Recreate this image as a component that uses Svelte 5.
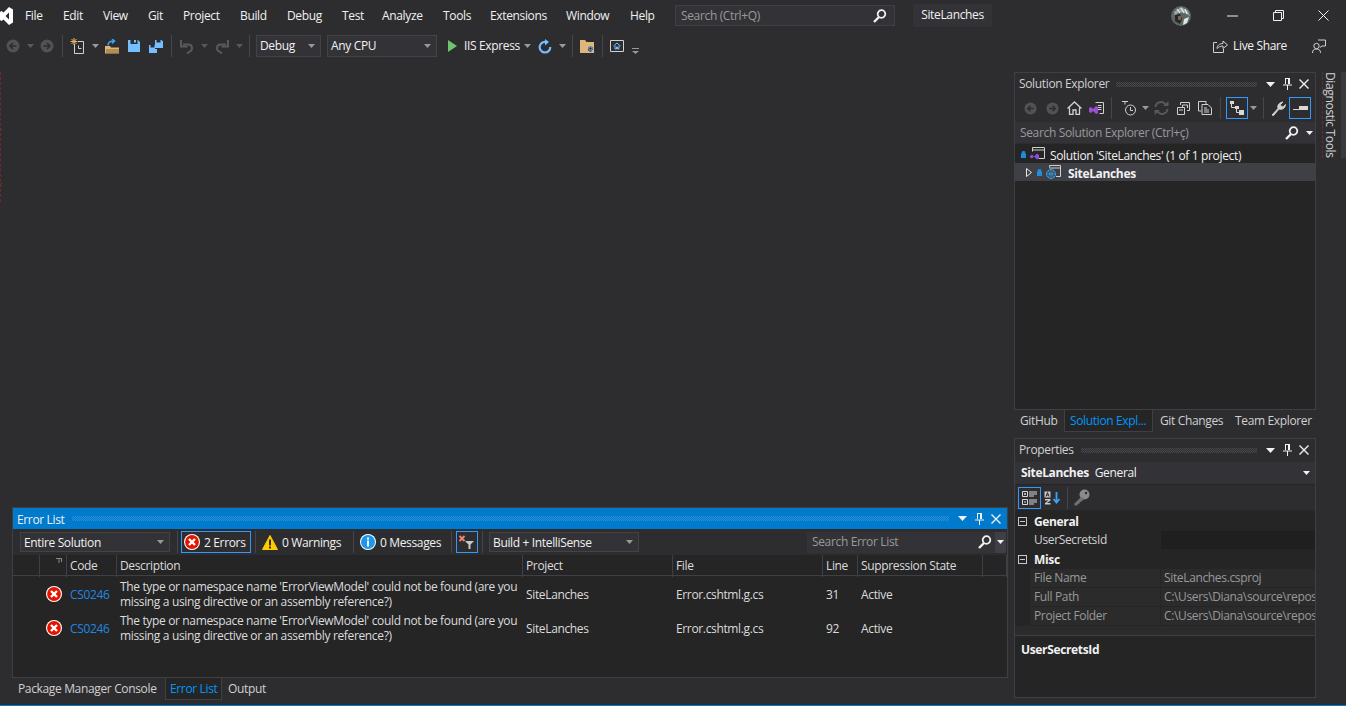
<script>
  const menus = ['File','Edit','View','Git','Project','Build','Debug','Test','Analyze','Tools','Extensions','Window','Help'];
  const errors = [
    { line: 31 },
    { line: 92 }
  ];
</script>

{#snippet arrow(cls)}
  <svg class={cls} width="7" height="4" viewBox="0 0 7 4"><path d="M0 0h7L3.5 4z" fill="currentColor"/></svg>
{/snippet}

{#snippet panelControls()}
  <span class="pc">
    <span class="pc-cell"><svg width="9" height="5" viewBox="0 0 9 5"><path d="M0 0h9L4.5 5z" fill="#f1f1f1"/></svg></span>
    <span class="pc-cell"><svg width="9" height="12" viewBox="0 0 9 12"><path d="M2 .5h5M2.5 1v5M6.5 1v5M5.5 1v5M0 7h9M4.5 7v5" stroke="#f1f1f1" fill="none"/></svg></span>
    <span class="pc-cell"><svg width="10" height="10" viewBox="0 0 10 10"><path d="M.5.5l9 9M9.5.5l-9 9" stroke="#f1f1f1" stroke-width="1.4" fill="none"/></svg></span>
  </span>
{/snippet}

{#snippet errorIcon()}
  <svg width="16" height="16" viewBox="0 0 16 16">
    <circle cx="8" cy="8" r="8" fill="#fff"/>
    <circle cx="8" cy="8" r="6.900" fill="#e51400"/>
    <path d="M5 5l6 6M11 5l-6 6" stroke="#fff" stroke-width="2.400" fill="none"/>
  </svg>
{/snippet}

{#snippet searchGlass()}
  <svg width="14" height="14" viewBox="0 0 14 14"><circle cx="8.500" cy="5" r="3.800" fill="none" stroke="#f1f1f1" stroke-width="1.800"/><path d="M6 8l-5 5" stroke="#f1f1f1" stroke-width="2.400"/></svg>
{/snippet}

{#snippet lock()}
  <svg width="5" height="7" viewBox="0 0 5 7"><path d="M0 3h5v4H0zM1 3V1.500a1.500 1.500 0 0 1 3 0V3" fill="#1c97ea" stroke="#1c97ea" stroke-width=".6" fill-opacity=".9"/></svg>
{/snippet}

<div class="app">
  <header class="menubar">
    <span class="logo">
      <svg width="14" height="18" viewBox="0 0 14 18"><path fill-rule="evenodd" fill="#fff" d="M9 0l4 2.500v13L9 18l-5.500-5.500-2 1.500L0 13V5l1.500-1 2 1.500zM9 5.500L5.500 9 9 12.500z"/></svg>
    </span>
    <nav class="menus">
      {#each menus as m}<span>{m}</span>{/each}
    </nav>
    <div class="quick">
      <span>Search (Ctrl+Q)</span>
      {@render searchGlass()}
    </div>
    <div class="sln-name">SiteLanches</div>
    <span class="avatar">
      <svg width="20" height="20" viewBox="0 0 20 20">
        <circle cx="10" cy="10" r="10" fill="#5d6664"/>
        <path d="M3 6l7-5 7 4 2 5-5-3-6-1-4 4z" fill="#9aa6a4"/>
        <path d="M6 3l3 4M10 2l3 5M14 3l2 5" stroke="#e4ebea" stroke-width="1.200"/>
        <path d="M4 9l5-1 2 5-2 5-5-3z" fill="#2c2727"/>
        <path d="M7 10h3v4H7z" fill="#7d5f58"/>
        <path d="M13 13l5-2-2 6-4 2z" fill="#dfe6e5"/>
      </svg>
    </span>
    <span class="win"><svg width="11" height="2" viewBox="0 0 11 2"><path d="M0 1h11" stroke="#f1f1f1"/></svg></span>
    <span class="win"><svg width="11" height="11" viewBox="0 0 11 11"><path d="M.5 2.500h8v8h-8zM2.500 2.500v-2h8v8h-2" fill="none" stroke="#f1f1f1"/></svg></span>
    <span class="win last"><svg width="11" height="11" viewBox="0 0 11 11"><path d="M.5.5l10 10M10.500.5l-10 10" stroke="#f1f1f1" fill="none"/></svg></span>
  </header>

  <div class="toolbar">
    <span class="ic w20"><svg width="14" height="14" viewBox="0 0 14 14"><circle cx="7" cy="7" r="6.500" fill="#525254"/><path d="M10.500 7h-6M7 4L4 7l3 3" stroke="#2d2d30" stroke-width="1.600" fill="none"/></svg></span>
    <span class="ic w14 dim">{@render arrow('')}</span>
    <span class="ic w20"><svg width="14" height="14" viewBox="0 0 14 14"><circle cx="7" cy="7" r="6.500" fill="#525254"/><path d="M3.500 7h6M7 4l3 3-3 3" stroke="#2d2d30" stroke-width="1.600" fill="none"/></svg></span>
    <span class="sep w10"></span>
    <span class="ic w21"><svg width="15" height="16" viewBox="0 0 15 16"><path d="M4.500 6v9.500h9V3.500H8" fill="none" stroke="#d0d0d0"/><path d="M8.500 7.500v3h3" fill="none" stroke="#d0d0d0"/><path d="M4 0v7M.5 3.500h7M1.500 1l5 5M6.500 1l-5 5" stroke="#e8b965"/></svg></span>
    <span class="ic w14 mid">{@render arrow('')}</span>
    <span class="ic w20"><svg width="15" height="15" viewBox="0 0 15 15"><path d="M0 14.500V7h5l1 1.500h8v6z" fill="#dcb67a"/><path d="M1 14h13V10H1z" fill="#b58d4f"/><path d="M3 6.500C3 3.500 5 2 9 2M7 .0l2.500 2L7 4.500" fill="none" stroke="#3ba4f5" stroke-width="1.500"/></svg></span>
    <span class="ic w24"><svg width="12" height="12" viewBox="0 0 12 12"><path d="M0 0h2.500v4h7V0H10l2 2v10H0z" fill="#75beff"/><path d="M6 0h2v2.500H6z" fill="#75beff"/></svg></span>
    <span class="ic w20"><svg width="14" height="13" viewBox="0 0 14 13"><path d="M6 0h1.500v2.500h4V0h1L14 1.500V8H6z" fill="#75beff"/><path d="M0 5h1.500v2.500h4V5h.500v8H0z" fill="#75beff"/><path d="M6 9h2v4H6z" fill="#75beff"/></svg></span>
    <span class="sep w10"></span>
    <span class="ic w20"><svg width="13" height="15" viewBox="0 0 13 15"><path d="M3 5.500h5.500a3.700 3.700 0 0 1 1 7.200L7 14.500" fill="none" stroke="#59595b" stroke-width="2"/><path d="M1 1v6.500h6.500" fill="none" stroke="#59595b" stroke-width="2"/></svg></span>
    <span class="ic w16 dim">{@render arrow('')}</span>
    <span class="ic w20"><svg width="13" height="15" viewBox="0 0 13 15"><path d="M10 5.500H4.500a3.700 3.700 0 0 0-1 7.200L6 14.500" fill="none" stroke="#59595b" stroke-width="2"/><path d="M12 1v6.500H5.500" fill="none" stroke="#59595b" stroke-width="2"/></svg></span>
    <span class="ic w14 dim">{@render arrow('')}</span>
    <span class="sep w6"></span>
    <div class="combo c-debug"><span>Debug</span>{@render arrow('')}</div>
    <div class="combo c-cpu"><span>Any CPU</span>{@render arrow('')}</div>
    <span class="ic w20 play"><svg width="9" height="12" viewBox="0 0 9 12"><path d="M0 0l9 6-9 6z" fill="#6fc26f"/></svg></span>
    <span class="iis">IIS Express</span>
    <span class="ic w16 mid">{@render arrow('')}</span>
    <span class="ic w20"><svg width="14" height="15" viewBox="0 0 14 15"><path d="M9.500 3.500A5.300 5.300 0 1 0 12.300 8" fill="none" stroke="#75beff" stroke-width="2.200"/><path d="M7 0v6.500L11 3z" fill="#75beff"/></svg></span>
    <span class="ic w14 mid">{@render arrow('')}</span>
    <span class="sep w6"></span>
    <span class="ic w24"><svg width="15" height="13" viewBox="0 0 15 13"><path d="M0 13V0h5l1.500 2H14v11z" fill="#dcb67a"/><circle cx="10.500" cy="9" r="2.200" fill="#2d2d30" stroke="#2d2d30"/><circle cx="10.500" cy="8.500" r="1.700" fill="none" stroke="#75beff"/><path d="M12 10l2 2" stroke="#75beff" stroke-width="1.400"/></svg></span>
    <span class="sep w6"></span>
    <span class="ic w24"><svg width="14" height="12" viewBox="0 0 14 12"><path d="M.5.5h13v11H.5z" fill="none" stroke="#d0d0d0"/><path d="M3.500 6L7 3l3.500 3M5 5.500v3.500h1.500V7h1v2H9V5.500" fill="none" stroke="#75beff"/></svg></span>
    <span class="ic w12 overflow"><svg width="7" height="6" viewBox="0 0 7 6"><path d="M0 .5h7" stroke="#999"/><path d="M0 3h7L3.500 6z" fill="#999"/></svg></span>
    <span class="share">
      <svg width="15" height="14" viewBox="0 0 15 14"><path d="M4 3.500H.5v10h10V10" fill="none" stroke="#d0d0d0"/><path d="M4 9.500c0-3 2.500-5 6-5V2l4.500 4L10 9.500V7C7.500 7 5.500 8 4 9.500z" fill="none" stroke="#d0d0d0"/></svg>
      <span>Live Share</span>
    </span>
    <span class="feedback">
      <svg width="14" height="14" viewBox="0 0 14 14"><circle cx="4.500" cy="7" r="2.700" fill="none" stroke="#d0d0d0"/><path d="M.5 14c0-3 1.500-4 4-4s4 1 4 4M6 1h7.500v6H10L8 8.500" fill="none" stroke="#d0d0d0"/></svg>
    </span>
  </div>

  <main class="workspace">
    <aside class="left-rail">
      <div class="rail-clip"><span>Server Explorer</span><span class="second">Toolbox</span></div>
    </aside>

    <section class="center">
      <div class="editor"></div>
      <div class="errors">
        <div class="title active">
          <span>Error List</span><i class="grip"></i>{@render panelControls()}
        </div>
        <div class="err-tools">
          <div class="combo c-scope"><span>Entire Solution</span>{@render arrow('')}</div>
          <span class="sep w8 first"></span>
          <button class="toggle on">{@render errorIcon()}<span>2 Errors</span></button>
          <span class="sep w8"></span>
          <button class="toggle warn">
            <svg width="16" height="15" viewBox="0 0 16 15"><path d="M8 .5L15.500 14.500H.5z" fill="#ffcc00" stroke="#ffcc00" stroke-linejoin="round"/><path d="M8 4.500v6M8 11.500v2" stroke="#1e1e1e" stroke-width="1.800"/></svg>
            <span>0 Warnings</span>
          </button>
          <span class="sep w8"></span>
          <button class="toggle info">
            <svg width="16" height="16" viewBox="0 0 16 16"><circle cx="8" cy="8" r="8" fill="#fff"/><circle cx="8" cy="8" r="7" fill="#1c97ea"/><path d="M8 6.500v6M8 3.500v2" stroke="#fff" stroke-width="2"/></svg>
            <span>0 Messages</span>
          </button>
          <span class="sep w8"></span>
          <button class="toggle filter">
            <svg width="16" height="14" viewBox="0 0 16 14"><path d="M.5 1l5 5M5.500 1l-5 5" stroke="#f48771" stroke-width="1.800"/><path d="M6 6h9l-3.500 3.500V14h-2V9.500z" fill="#c8c8c8"/></svg>
          </button>
          <span class="sep w8"></span>
          <div class="combo c-build"><span>Build + IntelliSense</span>{@render arrow('')}</div>
          <div class="search s-err">
            <span>Search Error List</span>
            {@render searchGlass()}
            <span class="drop">{@render arrow('')}</span>
          </div>
        </div>
        <div class="table">
          <div class="row head">
            <span></span>
            <span class="sort"><svg width="6" height="6" viewBox="0 0 6 6"><path d="M0 .5h6M3 1v4M5.500 1v3" stroke="#888"/></svg></span>
            <span>Code</span><span>Description</span><span>Project</span><span>File</span><span>Line</span><span>Suppression State</span><span></span>
          </div>
          {#each errors as e}
            <div class="row">
              <span></span>
              <span class="ico">{@render errorIcon()}</span>
              <span class="code">CS0246</span>
              <span class="desc">The type or namespace name 'ErrorViewModel' could not be found (are you<br>missing a using directive or an assembly reference?)</span>
              <span>SiteLanches</span>
              <span>Error.cshtml.g.cs</span>
              <span>{e.line}</span>
              <span>Active</span>
              <span></span>
            </div>
          {/each}
        </div>
      </div>
      <div class="tabs bottom-tabs">
        <span class="tab t-pmc">Package Manager Console</span>
        <span class="tab sel t-err">Error List</span>
        <span class="tab t-out">Output</span>
      </div>
    </section>

    <section class="right">
      <div class="panel se">
        <div class="title"><span>Solution Explorer</span><i class="grip"></i>{@render panelControls()}</div>
        <div class="se-tools">
          <span class="ic w22"><svg width="13" height="13" viewBox="0 0 14 14"><circle cx="7" cy="7" r="6.500" fill="#525254"/><path d="M10.500 7h-6M7 4L4 7l3 3" stroke="#2d2d30" stroke-width="1.600" fill="none"/></svg></span>
          <span class="ic w22"><svg width="13" height="13" viewBox="0 0 14 14"><circle cx="7" cy="7" r="6.500" fill="#525254"/><path d="M3.500 7h6M7 4l3 3-3 3" stroke="#2d2d30" stroke-width="1.600" fill="none"/></svg></span>
          <span class="ic w22"><svg width="15" height="14" viewBox="0 0 15 14"><path d="M.5 7.500L7.500 1l7 6.500M2.500 6.500v7h3.500V9h3v4.500h3.500v-7" fill="none" stroke="#d0d0d0" stroke-width="1.300"/></svg></span>
          <span class="ic w22"><svg width="15" height="13" viewBox="0 0 15 13"><path d="M6.500.5h8v11h-4" fill="none" stroke="#d0d0d0"/><path d="M9 3.500h3.500M9 5.500h3.500M9 7.500h3.500" stroke="#d0d0d0"/><path d="M0 6l2-1 2 2 3-3 2 1v6l-2 1-3-3-2 2-2-1z" fill="#9b4fd6"/></svg></span>
          <span class="sep w8"></span>
          <span class="ic w22 clock"><svg width="15" height="15" viewBox="0 0 15 15"><circle cx="8.500" cy="9" r="5" fill="none" stroke="#d0d0d0"/><path d="M8.500 6v3.500h2.500M0 .5h6M3 .5v3" stroke="#d0d0d0" fill="none"/></svg></span>
          <span class="ic w10 mid">{@render arrow('')}</span>
          <span class="ic w22"><svg width="15" height="14" viewBox="0 0 15 14"><path d="M1.500 6a5.500 5.500 0 0 1 10-2.500M13.500 8a5.500 5.500 0 0 1-10 2.500" fill="none" stroke="#59595b" stroke-width="2"/><path d="M9 5h5.500V0zM6 9H.5v5z" fill="#59595b"/></svg></span>
          <span class="ic w22"><svg width="13" height="13" viewBox="0 0 13 13"><path d="M.5 5.500h7v7h-7zM2 8h4M3.500 3V.5h9v8H10M5.500 5.500V3h5v3" fill="none" stroke="#d0d0d0"/></svg></span>
          <span class="ic w22"><svg width="14" height="14" viewBox="0 0 14 14"><path d="M3.500 10H.5V.5h7.500V3" fill="none" stroke="#d0d0d0"/><path d="M4 3.500h6l3.500 3.500v6.500H4z" fill="none" stroke="#d0d0d0"/><path d="M6 7h3M6 9h5M6 11h5" stroke="#d0d0d0"/></svg></span>
          <span class="sep w8"></span>
          <span class="boxed b1"><svg width="14" height="14" viewBox="0 0 14 14"><path d="M0 0h4v3H0zM5 5h4v3H5zM9 9h5v5H9z" fill="#d8d8d8"/><path d="M1.500 3v3.500H5M6.500 8v3.500H9" fill="none" stroke="#d8d8d8"/></svg></span>
          <span class="ic w10 mid">{@render arrow('')}</span>
          <span class="sep w10"></span>
          <span class="ic w20"><svg width="15" height="15" viewBox="0 0 15 15"><path d="M1 14l6-6.500c-1-3 1-6 5-6.500L9.500 3.500l.5 2 2 .5L14.500 3.500c-.5 4-3.500 5.500-6.500 4.500L2.500 14.500z" fill="#d0d0d0" stroke="#d0d0d0"/></svg></span>
          <span class="boxed b2"><svg width="15" height="4" viewBox="0 0 15 4"><path d="M0 3.500h15" stroke="#d8d8d8"/><path d="M6 0h9v3H6z" fill="#d8d8d8"/></svg></span>
        </div>
        <div class="search s-se">
          <span>Search Solution Explorer (Ctrl+ç)</span>
          {@render searchGlass()}
          <span class="drop">{@render arrow('')}</span>
        </div>
        <div class="tree">
          <div class="node root">
            {@render lock()}
            <svg class="nodeicon" width="15" height="14" viewBox="0 0 15 14"><path d="M2.500.5h12v11H9M2.500.5v4M2.500 3h12" fill="none" stroke="#d0d0d0"/><path d="M0 9l2-1.500 2 2 3-3 2 1.500v3.500l-2 1-3-3-2 2-2-1z" fill="#8a4fd6"/></svg>
            <span>Solution 'SiteLanches' (1 of 1 project)</span>
          </div>
          <div class="node sel">
            <svg class="exp" width="6" height="9" viewBox="0 0 6 9"><path d="M.5.5l5 4-5 4z" fill="none" stroke="#e8e8e8"/></svg>
            {@render lock()}
            <svg class="nodeicon" width="15" height="14" viewBox="0 0 15 14"><path d="M3.500.5h11v11H10M3.500.5v2M3.500 3h11" fill="none" stroke="#d0d0d0"/><circle cx="5" cy="9" r="4.500" fill="#3f3f46" stroke="#3aa0e8"/><path d="M.5 9h9M5 4.500v9M2.500 6c1.500 2 1.500 4 0 6M7.500 6c-1.500 2-1.500 4 0 6" fill="none" stroke="#3aa0e8" stroke-width=".8"/></svg>
            <b>SiteLanches</b>
          </div>
        </div>
      </div>

      <div class="tabs side-tabs">
        <span class="tab t-gh">GitHub</span>
        <span class="tab sel t-se">Solution Expl...</span>
        <span class="tab t-gc">Git Changes</span>
        <span class="tab">Team Explorer</span>
      </div>

      <div class="panel props">
        <div class="title"><span>Properties</span><i class="grip"></i>{@render panelControls()}</div>
        <div class="prop-obj"><b>SiteLanches</b><span>General</span>{@render arrow('')}</div>
        <div class="prop-tools">
          <span class="boxed b3"><svg width="15" height="14" viewBox="0 0 15 14"><path d="M.5.5h5v5h-5zM.5 8.500h5v5h-5z" fill="none" stroke="#d8d8d8"/><path d="M2 3h2M3 2v2M2 11h2" stroke="#d8d8d8"/><path d="M7 1h8M7 3h8M7 5h5M7 9h8M7 11h8M7 13h5" stroke="#d8d8d8"/></svg></span>
          <span class="ic w22 az"><svg width="16" height="14" viewBox="0 0 16 14"><path d="M.5.500h6v6h-6z" fill="#c8c8c8"/><path d="M2 5.500l1.500-4 1.500 4M2.500 4h2" stroke="#2d2d30" fill="none"/><path d="M1 8h5.500v1.500L3 12h3.500v1.500H1V12l3.500-2.500H1z" fill="#c8c8c8"/><path d="M12.500 1v10M9.500 8l3 3.500 3-3.500" fill="none" stroke="#3ba4f5" stroke-width="1.800"/></svg></span>
          <span class="sep w8"></span>
          <span class="ic w20"><svg width="17" height="17" viewBox="0 0 17 17"><circle cx="11.500" cy="5.500" r="5" fill="#8a8a8a"/><path d="M8 8L1 15l1 1.500h2l1-1.500 1.500-.5.500-1.500 1.500-.5L11 10z" fill="#707070"/><circle cx="13" cy="4" r="1.200" fill="#2d2d30"/></svg></span>
        </div>
        <div class="grid-rows">
          <div class="group"><span class="minus"></span><b>General</b></div>
          <div class="prow strong"><span>UserSecretsId</span><span class="val empty"></span></div>
          <div class="group"><span class="minus"></span><b>Misc</b></div>
          <div class="prow"><span>File Name</span><span class="val">SiteLanches.csproj</span></div>
          <div class="prow"><span>Full Path</span><span class="val">C:\Users\Diana\source\repos\SiteLanches</span></div>
          <div class="prow"><span>Project Folder</span><span class="val">C:\Users\Diana\source\repos\SiteLanches</span></div>
          <div class="filler"></div>
        </div>
        <div class="prop-desc"><b>UserSecretsId</b></div>
      </div>
    </section>

    <aside class="right-rail"><span>Diagnostic Tools</span><i class="rail-strip"></i></aside>
  </main>
  <div class="status-line"></div>
</div>

<style>
  :global(body) {
    margin: 0;
    background: #2d2d30;
  }
  .app {
    width: 1346px;
    height: 706px;
    display: flex;
    flex-direction: column;
    overflow: hidden;
    background: #2d2d30;
    color: #f1f1f1;
    font: 12px/16px "Open Sans", "Noto Sans", sans-serif;
    letter-spacing: -0.35px;
  }
  svg { display: block; flex: none; }
  b { font-weight: 700; }

  .menubar {
    height: 31px;
    flex: none;
    display: flex;
    align-items: center;
  }
  .menubar > * { flex: none; }
  .logo { width: 21px; padding-top: 1px; }
  .menus {
    display: grid;
    grid-template-columns: 38px 40px 45px 35px 57px 47px 55px 40px 61px 47px 76px 64px 45px;
    width: 650px;
    padding-left: 4px;
    box-sizing: border-box;
  }
  .quick {
    width: 220px;
    height: 21px;
    margin-left: 4px;
    box-sizing: border-box;
    display: flex;
    align-items: center;
    justify-content: space-between;
    padding: 0 7px 0 5px;
    border: 1px solid #3f3f46;
    background: #333337;
    color: #999;
  }
  .sln-name {
    margin-left: 18px;
    width: 79px;
    height: 23px;
    line-height: 22px;
    text-align: center;
    background: #333337;
  }
  .avatar { margin-left: 179px; width: 38px; }
  .win { width: 46px; display: flex; justify-content: center; }
  .win.last { width: 45px; }

  .toolbar {
    height: 31px;
    flex: none;
    display: flex;
    align-items: center;
    padding: 0 0 1px 3px;
    box-sizing: border-box;
  }
  .ic { display: flex; align-items: center; justify-content: center; flex: none; color: #c8c8c8; }
  .dim { color: #59595b; }
  .mid { color: #999; }
  .w10 { width: 10px; }
  .w12 { width: 12px; }
  .w14 { width: 14px; }
  .w16 { width: 16px; }
  .w20 { width: 20px; }
  .w21 { width: 21px; }
  .w22 { width: 22px; }
  .w24 { width: 24px; }
  .sep { flex: none; height: 22px; }
  .sep.w6 { width: 6px; }
  .sep.w8 { width: 8px; }
  .sep.w10 { width: 10px; }
  .sep.first { margin-left: 3px; }
  .sep::after {
    content: "";
    display: block;
    width: 1px;
    height: 100%;
    margin: 0 auto;
    background: #46464a;
  }
  .combo {
    flex: none;
    box-sizing: border-box;
    display: flex;
    align-items: center;
    justify-content: space-between;
    padding: 0 5px 0 3px;
    height: 22px;
    border: 1px solid #434346;
    background: #333337;
    color: #999;
  }
  .combo span { color: #f1f1f1; }
  .c-debug { width: 65px; margin-left: 4px; }
  .c-cpu { width: 110px; margin-left: 6px; }
  .play { margin-left: 5px; }
  .iis { width: 55px; margin-left: 2px; flex: none; white-space: nowrap; }
  .overflow { padding-top: 9px; }
  .share {
    margin-left: auto;
    display: flex;
    align-items: center;
    gap: 5px;
  }
  .feedback { margin: 0 20px 0 25px; }

  .workspace { flex: 1; min-height: 0; display: flex; }
  .left-rail {
    width: 12px;
    flex: none;
    color: #d0d0d0;
  }
  .rail-clip {
    height: 130px;
    margin-top: 10px;
    overflow: hidden;
    box-sizing: border-box;
    border-left: 1px dashed #6e2a2f;
  }
  .rail-clip span {
    display: block;
    writing-mode: vertical-rl;
    white-space: nowrap;
    margin-left: -14px;
    width: 16px;
  }
  .rail-clip .second { margin-top: 9px; }

  .center { width: 996px; flex: none; display: flex; flex-direction: column; padding-bottom: 5px; box-sizing: border-box; }
  .editor { flex: 1; }
  .errors {
    height: 171px;
    flex: none;
    box-sizing: border-box;
    border: 1px solid #3f3f46;
    display: flex;
    flex-direction: column;
  }
  .title {
    height: 23px;
    flex: none;
    display: flex;
    align-items: center;
    padding: 0 0 1px 4px;
    box-sizing: border-box;
    color: #d0d0d0;
  }
  .title.active { background: #007acc; color: #f1f1f1; height: 21px; padding-bottom: 0; }
  .title.active > span:first-child { padding-top: 2px; }
  .grip {
    flex: 1;
    height: 5px;
    margin: 0 6px 0 7px;
    background: repeating-conic-gradient(#4a4a4e 0 25%, transparent 0 50%) 0 0 / 2px 2px;
  }
  .title.active .grip {
    background: repeating-conic-gradient(#2d90d4 0 25%, transparent 0 50%) 0 0 / 2px 2px;
  }
  .pc { display: flex; padding-right: 3px; }
  .pc-cell { width: 16.5px; display: flex; justify-content: center; align-items: center; }

  .err-tools {
    height: 26px;
    flex: none;
    display: flex;
    align-items: center;
    padding-left: 7px;
  }
  .err-tools .combo > span, .toggle > span { padding-top: 2px; }
  .c-scope { width: 150px; height: 20px; }
  .c-build { width: 150px; height: 20px; margin-left: 3px; }
  .toggle {
    flex: none;
    height: 22px;
    box-sizing: border-box;
    display: flex;
    align-items: center;
    gap: 4px;
    padding: 0 3px;
    margin: 0;
    background: none;
    border: 1px solid transparent;
    color: #f1f1f1;
    font: inherit;
    letter-spacing: inherit;
  }
  .toggle.on { width: 70px; border-color: #3399ff; padding-left: 2px; }
  .toggle.warn { width: 90px; padding-left: 2px; }
  .toggle.info { width: 90px; padding-left: 2px; }
  .toggle.filter { width: 22px; border-color: #3399ff; padding: 0 2px; margin-left: 1px; }
  .search {
    display: flex;
    align-items: center;
    box-sizing: border-box;
    background: #333337;
    color: #999;
    height: 21px;
    padding-left: 4px;
  }
  .search > span:first-child { flex: 1; white-space: nowrap; }
  .drop {
    width: 12px;
    margin-left: 4px;
    align-self: stretch;
    display: flex;
    align-items: center;
    justify-content: center;
    color: #f1f1f1;
  }
  .s-err { width: 199px; margin-left: 168px; padding-left: 5px; }
  .s-err .drop { width: 11px; margin-left: 3px; background: #3f3f46; }

  .table { flex: 1; background: #252526; color: #dcdcdc; }
  .row {
    display: grid;
    grid-template-columns: 27px 26px 50px 406px 150px 150px 35px 125px 24px;
    height: 34px;
    align-items: center;
  }
  .row > span { padding: 1px 0 0 4px; white-space: nowrap; }
  .row.head {
    height: 21px;
    background: #252526;
    border-bottom: 1px solid #3f3f46;
    margin-bottom: 1px;
    box-sizing: border-box;
    align-items: stretch;
    line-height: 20px;
  }
  .row.head > span { padding: 0 0 0 4px; line-height: 22px; border-right: 1px solid #3f3f46; margin-right: -1px; }
  .row.head > span:first-child { margin-right: 0; }
  .row.head > .sort { display: flex; justify-content: flex-end; padding: 3px 4px 0 0; }
  .row > .ico { padding: 0 0 0 6px; }
  .code { color: #1f87e0; }
  .row > .desc { line-height: 15px; padding-top: 0; margin-top: -1px; }

  .tabs { display: flex; height: 22px; flex: none; color: #d0d0d0; }
  .tab { flex: none; padding: 0 6px 0 5px; line-height: 21px; box-sizing: border-box; white-space: nowrap; }
  .tab.sel {
    color: #0097fb;
    background: #252526;
    border: 1px solid #3f3f46;
    border-top: none;
  }
  .t-pmc { width: 152px; }
  .t-err { width: 57px; padding-left: 4px; }
  .t-out { padding-left: 6px; }
  .bottom-tabs { padding-left: 1px; }
  .side-tabs { margin-bottom: 6px; }
  .t-gh { width: 50px; padding-left: 6px; }
  .t-se { width: 89px; padding-left: 5px; }
  .t-gc { width: 77px; padding-left: 7px; }

  .right { width: 302px; flex: none; margin-left: 6px; padding-top: 10px; box-sizing: border-box; display: flex; flex-direction: column; }
  .panel { border: 1px solid #3f3f46; box-sizing: border-box; display: flex; flex-direction: column; }
  .se { height: 338px; flex: none; }
  .se-tools { height: 26px; flex: none; display: flex; align-items: center; padding: 0 0 2px 4px; box-sizing: border-box; }
  .clock { margin-left: 3px; }
  .boxed {
    flex: none;
    box-sizing: border-box;
    display: flex;
    align-items: center;
    justify-content: center;
    border: 1px solid #3399ff;
    height: 22px;
  }
  .b1 { width: 22px; margin-left: 2px; }
  .b2 { width: 22px; margin-left: 1px; }
  .b3 { width: 23px; }
  .s-se { width: 300px; margin: 0 0 1px; }
  .s-se > span:first-child { padding-left: 1px; }
  .tree { flex: 1; background: #252526; padding-top: 1px; }
  .node { height: 18px; display: flex; align-items: center; white-space: nowrap; }
  .node > span, .node > b { padding-top: 3px; }
  .node.root { padding-left: 6px; }
  .node.root .nodeicon { margin: 0 5px 0 4px; }
  .node.sel { background: #3f3f46; padding-left: 11px; }
  .node.sel .exp { margin-right: 5px; }
  .node.sel .nodeicon { margin: 0 7px 0 4px; }

  .props { flex: 1; margin-bottom: 7px; }
  .prop-obj {
    height: 23px;
    flex: none;
    display: flex;
    align-items: center;
    padding: 0 5px 1px 6px;
    background: #333337;
    border-bottom: 1px solid #252526;
    box-sizing: border-box;
  }
  .prop-obj span { margin-left: 6px; flex: 1; }
  .prop-tools { height: 25px; flex: none; display: flex; align-items: center; padding-left: 3px; }
  .grid-rows { background: #252526; padding-top: 2px; flex: none; height: 125px; box-sizing: border-box; display: flex; flex-direction: column; }
  .group { height: 19px; display: flex; align-items: center; padding-left: 3px; flex: none; }
  .group b { margin-left: 7px; }
  .minus {
    width: 9px;
    height: 9px;
    box-sizing: border-box;
    border: 1px solid #c8c8c8;
    background: linear-gradient(#c8c8c8, #c8c8c8) center / 5px 1px no-repeat;
  }
  .prow {
    height: 19px;
    flex: none;
    display: grid;
    grid-template-columns: 131px 1fr;
    margin-left: 15px;
    color: #999;
    overflow: hidden;
  }
  .prow > span {
    padding-left: 4px;
    background: #2b2b2c;
    line-height: 18px;
    border-bottom: 1px solid #252526;
    white-space: nowrap;
    overflow: hidden;
  }
  .prow > .val { padding-left: 3px; }
  .prow > span:first-child { border-right: 1px solid #252526; }
  .prow.strong { color: #d0d0d0; }
  .prow.strong > span:first-child { background: none; }
  .prow .val.empty { background: #1f1f1f; }
  .filler { flex: 1; background: #2b2b2c; }
  .prop-desc {
    flex: 1;
    background: #252526;
    border-top: 1px solid #3f3f46;
    padding: 6px 6px 0;
  }

  .right-rail {
    width: 30px;
    flex: none;
    padding-top: 10px;
    box-sizing: border-box;
    display: flex;
    align-items: flex-start;
    color: #d0d0d0;
  }
  .right-rail span {
    writing-mode: vertical-rl;
    white-space: nowrap;
    height: 86px;
    margin-left: 6px;
    border-left: 1px dashed #6e2a2f;
    line-height: 14px;
  }
  .rail-strip {
    width: 5px;
    height: 86px;
    margin-left: auto;
    background: #3a3a3d;
  }
  .status-line { height: 1px; flex: none; background: #007acc; }
</style>
